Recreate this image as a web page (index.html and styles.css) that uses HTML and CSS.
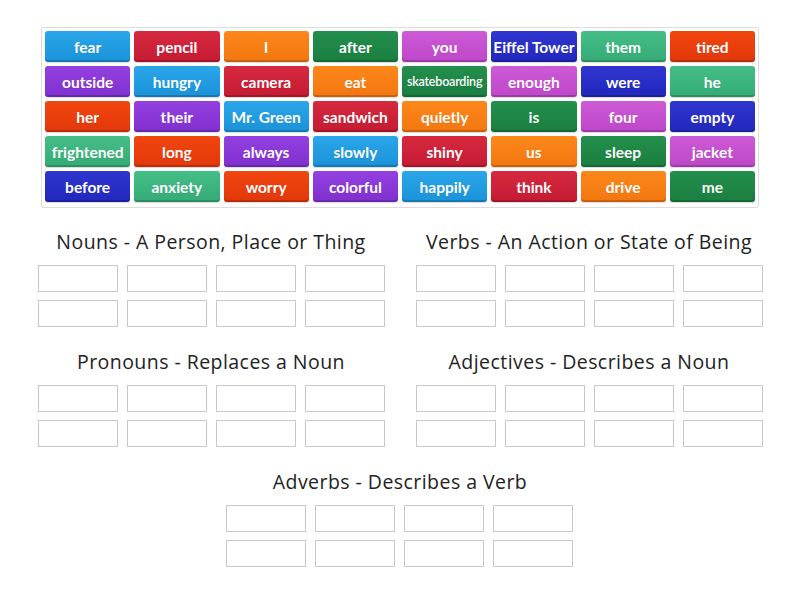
FILE: index.html
```html
<!DOCTYPE html>
<html lang="en">
<head>
<meta charset="utf-8">
<title>Parts of Speech Sort</title>
<link rel="stylesheet" href="styles.css">
</head>
<body>
<div class="board">
  <div class="tile c-blue">fear</div>
  <div class="tile c-red">pencil</div>
  <div class="tile c-orange">I</div>
  <div class="tile c-dgreen">after</div>
  <div class="tile c-magenta">you</div>
  <div class="tile c-dblue">Eiffel Tower</div>
  <div class="tile c-teal">them</div>
  <div class="tile c-rorange">tired</div>

  <div class="tile c-violet">outside</div>
  <div class="tile c-blue">hungry</div>
  <div class="tile c-red">camera</div>
  <div class="tile c-orange">eat</div>
  <div class="tile c-dgreen small">skateboarding</div>
  <div class="tile c-magenta">enough</div>
  <div class="tile c-dblue">were</div>
  <div class="tile c-teal">he</div>

  <div class="tile c-rorange">her</div>
  <div class="tile c-violet">their</div>
  <div class="tile c-blue">Mr. Green</div>
  <div class="tile c-red">sandwich</div>
  <div class="tile c-orange">quietly</div>
  <div class="tile c-dgreen">is</div>
  <div class="tile c-magenta">four</div>
  <div class="tile c-dblue">empty</div>

  <div class="tile c-teal">frightened</div>
  <div class="tile c-rorange">long</div>
  <div class="tile c-violet">always</div>
  <div class="tile c-blue">slowly</div>
  <div class="tile c-red">shiny</div>
  <div class="tile c-orange">us</div>
  <div class="tile c-dgreen">sleep</div>
  <div class="tile c-magenta">jacket</div>

  <div class="tile c-dblue">before</div>
  <div class="tile c-teal">anxiety</div>
  <div class="tile c-rorange">worry</div>
  <div class="tile c-violet">colorful</div>
  <div class="tile c-blue">happily</div>
  <div class="tile c-red">think</div>
  <div class="tile c-orange">drive</div>
  <div class="tile c-dgreen">me</div>
</div>

<div class="groups">
  <section class="group">
    <h2 class="group-title">Nouns - A Person, Place or Thing</h2>
    <div class="slots">
      <div class="slot"></div><div class="slot"></div><div class="slot"></div><div class="slot"></div>
      <div class="slot"></div><div class="slot"></div><div class="slot"></div><div class="slot"></div>
    </div>
  </section>
  <section class="group">
    <h2 class="group-title">Verbs - An Action or State of Being</h2>
    <div class="slots">
      <div class="slot"></div><div class="slot"></div><div class="slot"></div><div class="slot"></div>
      <div class="slot"></div><div class="slot"></div><div class="slot"></div><div class="slot"></div>
    </div>
  </section>
  <section class="group">
    <h2 class="group-title">Pronouns - Replaces a Noun</h2>
    <div class="slots">
      <div class="slot"></div><div class="slot"></div><div class="slot"></div><div class="slot"></div>
      <div class="slot"></div><div class="slot"></div><div class="slot"></div><div class="slot"></div>
    </div>
  </section>
  <section class="group">
    <h2 class="group-title">Adjectives - Describes a Noun</h2>
    <div class="slots">
      <div class="slot"></div><div class="slot"></div><div class="slot"></div><div class="slot"></div>
      <div class="slot"></div><div class="slot"></div><div class="slot"></div><div class="slot"></div>
    </div>
  </section>
  <section class="group group-wide">
    <h2 class="group-title">Adverbs - Describes a Verb</h2>
    <div class="slots">
      <div class="slot"></div><div class="slot"></div><div class="slot"></div><div class="slot"></div>
      <div class="slot"></div><div class="slot"></div><div class="slot"></div><div class="slot"></div>
    </div>
  </section>
</div>
</body>
</html>
```

FILE: styles.css
```css
html, body {
  margin: 0;
  padding: 0;
  background: #ffffff;
}

body {
  font-family: "Lato", "Open Sans", "Liberation Sans", sans-serif;
  color: #222222;
}

.board {
  box-sizing: border-box;
  width: 718px;
  margin: 27px auto 0;
  padding: 3px 3px 5px 3px;
  border: 1px solid #dddddd;
  border-radius: 2px;
  display: grid;
  grid-template-columns: repeat(8, 1fr);
  grid-auto-rows: 31px;
  column-gap: 4px;
  row-gap: 4px;
}

.tile {
  display: flex;
  align-items: center;
  justify-content: center;
  border-radius: 3px;
  color: #ffffff;
  font-weight: 700;
  font-size: 15.5px;
  white-space: nowrap;
  overflow: hidden;
  box-shadow: inset 0 -2px 0 rgba(0, 0, 0, 0.18), 0 1px 1px rgba(0, 0, 0, 0.15);
  text-shadow: 0 1px 0 rgba(0, 0, 0, 0.08);
}

.tile.small {
  font-size: 12.5px;
  font-weight: 600;
  letter-spacing: -0.2px;
}

.c-blue    { background: linear-gradient(#2aa6ea, #1b92d8); }
.c-red     { background: linear-gradient(#d6293f, #c41b33); }
.c-orange  { background: linear-gradient(#fd881a, #f27610); }
.c-dgreen  { background: linear-gradient(#238f4d, #1a7e40); }
.c-magenta { background: linear-gradient(#cd5ad6, #be47c9); }
.c-dblue   { background: linear-gradient(#2f36cf, #2227bd); }
.c-teal    { background: linear-gradient(#44be87, #35ab76); }
.c-rorange { background: linear-gradient(#f2460f, #e2370a); }
.c-violet  { background: linear-gradient(#9340e0, #8030cf); }

.groups {
  width: 725px;
  margin: 22px auto 0;
  display: grid;
  grid-template-columns: 347px 347px;
  column-gap: 31px;
  row-gap: 23px;
}

.group-wide {
  grid-column: 1 / span 2;
  justify-self: center;
  width: 348px;
}

.group-title {
  margin: 0 0 11px;
  height: 24px;
  line-height: 24px;
  font-family: "Open Sans", "Lato", sans-serif;
  font-size: 19.5px;
  font-weight: 400;
  letter-spacing: 0.45px;
  text-align: center;
  color: #222222;
  white-space: nowrap;
}

.slots {
  display: grid;
  grid-template-columns: repeat(4, 80px);
  grid-auto-rows: 27px;
  column-gap: 9px;
  row-gap: 8px;
}

.slot {
  box-sizing: border-box;
  border: 1px solid #c8c8c8;
  background: #ffffff;
}
```
